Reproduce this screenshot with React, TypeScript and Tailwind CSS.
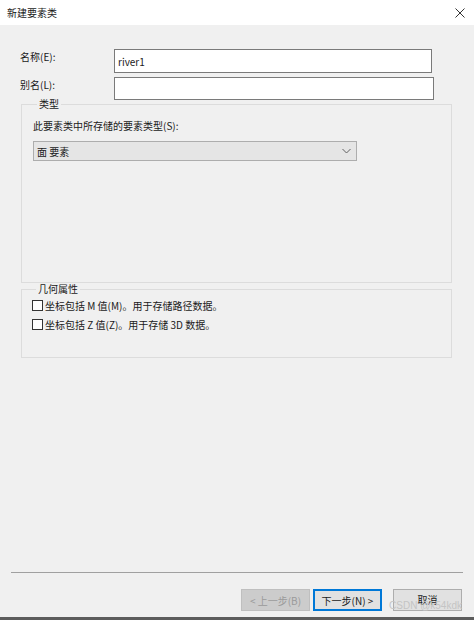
import React from 'react';

const font = { fontFamily: '"Microsoft YaHei", "Noto Sans CJK SC", "Noto Sans", sans-serif' };

const Checkbox: React.FC<{ label: string }> = ({ label }) => (
  <label className="flex items-center h-[19px]">
    <span className="w-[11px] h-[11px] border border-[#333333] bg-white mr-[2px]" />
    <span className="text-[10px] leading-[12px] text-[#1a1a1a]">{label}</span>
  </label>
);

export default function App() {
  return (
    <div className="w-[474px] h-[620px] flex flex-col bg-[#f0f0f0] text-[#1a1a1a] overflow-hidden" style={font}>
      {/* Title bar */}
      <div className="h-[25px] bg-white flex items-center justify-between pl-[7px] pr-[9px]">
        <span className="text-[10px] leading-[12px]">新建要素类</span>
        <svg width="10" height="10" viewBox="0 0 10 10" className="text-[#333333]">
          <path d="M0.5 0.5 L9.5 9.5 M9.5 0.5 L0.5 9.5" stroke="currentColor" strokeWidth="1" fill="none" />
        </svg>
      </div>

      {/* Body */}
      <div className="flex-1 flex flex-col relative">
        <div className="pt-[24px] flex flex-col gap-[4px]">
          <div className="flex items-start h-[24px]">
            <span className="w-[114px] pl-[20px] pt-[2px] text-[10px] leading-[12px]">名称(E):</span>
            <div className="w-[318px] h-[24px] border border-[#7a7a7a] bg-white flex items-center px-[3px] text-[10px]">
              river1
            </div>
          </div>
          <div className="flex items-start h-[23px]">
            <span className="w-[114px] pl-[20px] pt-[2px] text-[10px] leading-[12px]">别名(L):</span>
            <div className="w-[320px] h-[23px] border border-[#7a7a7a] bg-white" />
          </div>
        </div>

        <fieldset className="ml-[21px] w-[431px] mt-[-2px] border border-[#dcdcdc] pl-[11px] pt-[10px] h-[185px]">
          <legend className="ml-[4px] px-[2px] text-[10px] leading-[12px]">类型</legend>
          <div className="text-[10px] leading-[12px]">此要素类中所存储的要素类型(S):</div>
          <div className="mt-[9px] w-[324px] h-[20px] bg-[#e5e5e5] border border-[#adadad] flex items-center justify-between pl-[3px] pr-[5px] text-[10px]">
            <span>面 要素</span>
            <svg width="9" height="6" viewBox="0 0 9 6">
              <path d="M0.5 1 L4.5 5 L8.5 1" stroke="#606060" strokeWidth="1" fill="none" />
            </svg>
          </div>
        </fieldset>

        <fieldset className="ml-[21px] w-[431px] border border-[#dcdcdc] pl-[10px] pt-[1px] h-[75px]">
          <legend className="ml-[4px] px-[2px] text-[10px] leading-[12px]">几何属性</legend>
          <Checkbox label="坐标包括 M 值(M)。用于存储路径数据。" />
          <Checkbox label="坐标包括 Z 值(Z)。用于存储 3D 数据。" />
        </fieldset>

        <div className="mt-auto mx-[11px] h-px bg-[#a0a0a0]" />

        <div className="flex justify-end items-center pr-[12px] pt-[16px] pb-[6px]">
          <button className="w-[69px] h-[22px] bg-[#cccccc] border border-[#bfbfbf] text-[10px] text-[#9a9a9a]">
            &lt; 上一步(B)
          </button>
          <button className="ml-[3px] w-[69px] h-[22px] bg-[#e1e1e1] border-2 border-[#0078d7] text-[10px]">
            下一步(N) &gt;
          </button>
          <button className="ml-[11px] w-[69px] h-[22px] bg-[#e1e1e1] border border-[#adadad] text-[10px] leading-[12px] flex items-start justify-center pt-[4px]">
            取消
          </button>
        </div>

        <span className="absolute right-[12px] bottom-[6px] text-[10px] leading-[10px] text-[#c4c4c4] pointer-events-none" style={{ fontFamily: '"Liberation Sans", Arial, sans-serif' }}>
          CSDN @k54kdk
        </span>
      </div>

      <div className="h-[3px] bg-[#5c5c5c]" />
    </div>
  );
}
